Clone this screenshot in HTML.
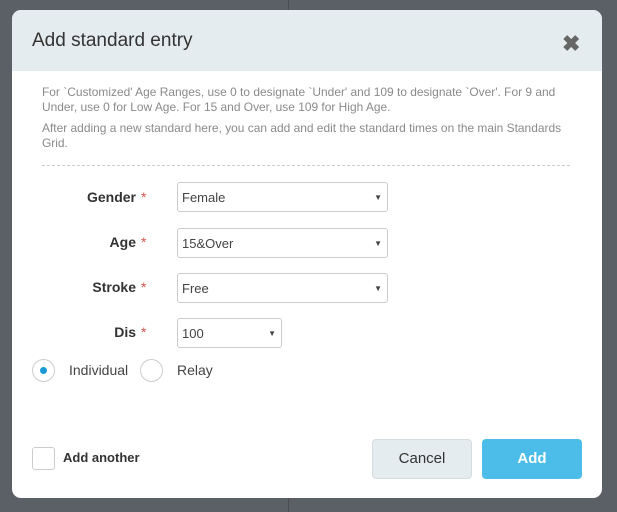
<!DOCTYPE html>
<html><head><style>
body{margin:0;width:617px;height:512px;background:#5b5f66;position:relative;overflow:hidden;font-family:"Liberation Sans",sans-serif}
.vl{position:absolute;left:288px;top:0;width:1px;height:512px;background:#4a4d53}
.m{position:absolute;left:12px;top:10px;width:590px;height:488px;background:#fff;border-radius:9px;overflow:hidden}
.h{height:61px;background:#e5ecef;position:relative}
.h span{position:absolute;left:20px;top:20px;font-size:19px;color:#333}
.x{position:absolute;left:550px;top:21px;font-size:22px;color:#666;font-weight:bold}
.t{position:absolute;left:30px;font-size:12px;color:#8a8a8a;line-height:15px;white-space:nowrap;transform:scaleX(.995);transform-origin:left}
.dash{position:absolute;left:30px;top:155px;width:528px;border-top:1px dashed #ccc}
.lb{position:absolute;width:118px;text-align:right;font-size:14px;font-weight:bold;color:#333}
.lb i{color:#d9534f;font-style:normal;font-weight:normal;position:absolute;left:123px}
.s{position:absolute;left:165px;width:209px;height:28px;border:1px solid #ccc;border-radius:3px;font-size:13px;color:#444;line-height:29px;text-indent:4px}
.s:after{content:"▼";position:absolute;right:5px;top:0;font-size:8px}
.r{position:absolute;top:349px;width:21px;height:21px;border:1px solid #ccc;border-radius:50%}
.rl{position:absolute;top:352px;font-size:14px;color:#444}
</style></head><body>
<div class="vl"></div>
<div class="m">
<div class="h"><span>Add standard entry</span><div class="x">✖</div></div>
<div class="t" style="top:75px">For `Customized' Age Ranges, use 0 to designate `Under' and 109 to designate `Over'. For 9 and<br>Under, use 0 for Low Age. For 15 and Over, use 109 for High Age.</div>
<div class="t" style="top:111px">After adding a new standard here, you can add and edit the standard times on the main Standards<br>Grid.</div>
<div class="dash"></div>
<div class="lb" style="top:179px;left:6px">Gender<i>*</i></div>
<div class="s" style="top:172px">Female</div>
<div class="lb" style="top:224px;left:6px">Age<i>*</i></div>
<div class="s" style="top:218px">15&amp;Over</div>
<div class="lb" style="top:269px;left:6px">Stroke<i>*</i></div>
<div class="s" style="top:263px">Free</div>
<div class="lb" style="top:314px;left:6px">Dis<i>*</i></div>
<div class="s" style="top:308px;width:103px">100</div>
<div class="r" style="left:20px"><div style="position:absolute;left:7px;top:7px;width:7px;height:7px;border-radius:50%;background:#1a9ad6"></div></div>
<div class="rl" style="left:57px">Individual</div>
<div class="r" style="left:128px"></div>
<div class="rl" style="left:165px">Relay</div>
<div style="position:absolute;left:20px;top:437px;width:21px;height:21px;border:1px solid #ccc;border-radius:3px"></div>
<div style="position:absolute;left:51px;top:440px;font-size:13px;font-weight:bold;color:#333">Add another</div>
<div style="position:absolute;left:360px;top:429px;width:98px;height:38px;border:1px solid #d5dde0;background:#e5ecef;border-radius:4px;text-align:center;line-height:38px;font-size:15px;color:#333">Cancel</div>
<div style="position:absolute;left:470px;top:429px;width:100px;height:40px;background:#4bbde8;border-radius:4px;text-align:center;line-height:40px;font-size:15px;font-weight:bold;color:#fff">Add</div>
</div>
</body></html>
